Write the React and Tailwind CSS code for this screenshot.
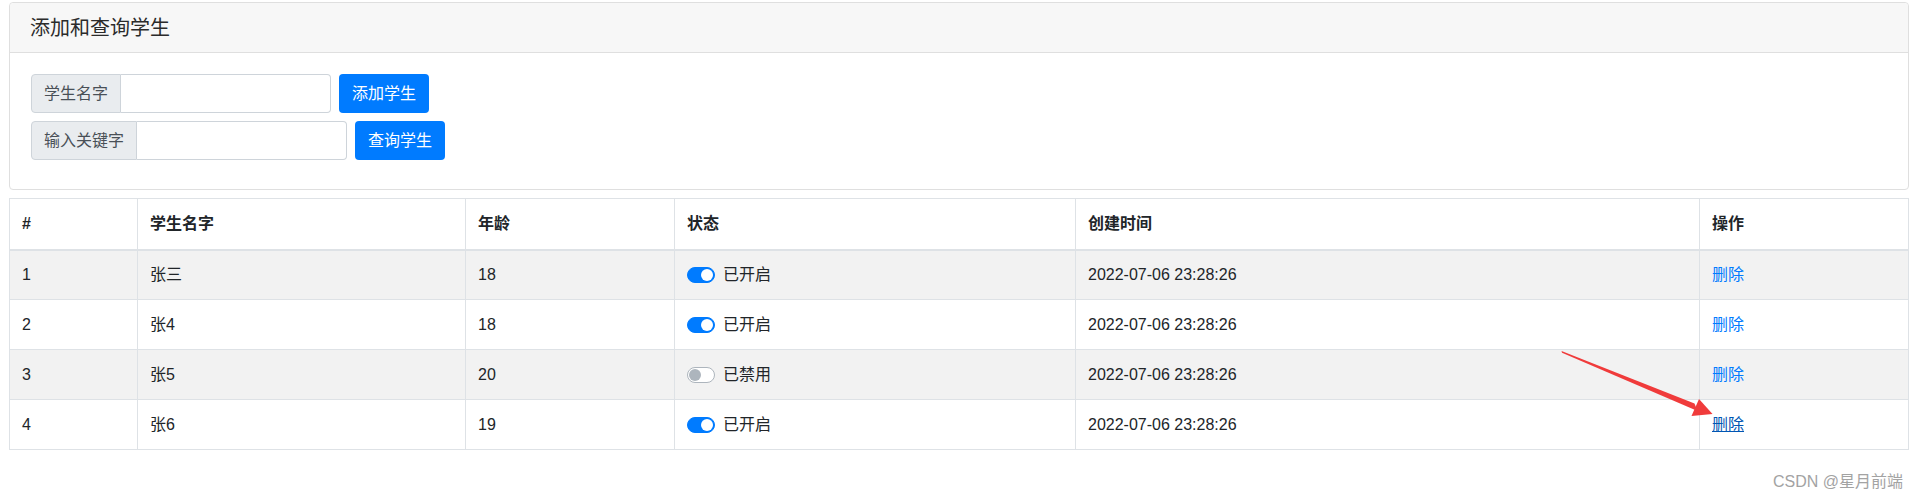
import { useState } from "react";

const students = [
  { id: 1, name: "张三", age: 18, on: true, created: "2022-07-06 23:28:26" },
  { id: 2, name: "张4", age: 18, on: true, created: "2022-07-06 23:28:26" },
  { id: 3, name: "张5", age: 20, on: false, created: "2022-07-06 23:28:26" },
  { id: 4, name: "张6", age: 19, on: true, created: "2022-07-06 23:28:26" },
];

function Switch({ on }) {
  return (
    <span
      className={
        on
          ? "flex items-center justify-end w-[28px] h-[16px] rounded-full border border-[#007bff] bg-[#007bff] px-[1px]"
          : "flex items-center justify-start w-[28px] h-[16px] rounded-full border border-[#adb5bd] bg-white px-[1px]"
      }
    >
      <span
        className={
          on
            ? "block w-[12px] h-[12px] rounded-full bg-white"
            : "block w-[12px] h-[12px] rounded-full bg-[#adb5bd]"
        }
      />
    </span>
  );
}

function InputGroup({ label, button }) {
  const [value, setValue] = useState("");
  return (
    <div className="flex h-[39px]">
      <span className="flex items-center px-3 bg-[#e9ecef] border border-[#ced4da] rounded-l-[4px] text-[#495057] text-base">
        {label}
      </span>
      <input
        value={value}
        onChange={(e) => setValue(e.target.value)}
        className="w-[210px] border border-l-0 border-[#ced4da] rounded-r-[4px] px-3 outline-none"
      />
      <button className="ml-[8px] px-[13px] bg-[#007bff] text-white text-base rounded-[4px]">
        {button}
      </button>
    </div>
  );
}

function App() {
  return (
    <div
      className="relative min-h-[499px] bg-white text-[#212529] text-base"
      style={{ fontFamily: '"Liberation Sans", "Noto Sans CJK SC", sans-serif' }}
    >
      <div className="pt-[2px] pl-[9px] pr-[10px]">
        {/* Card */}
        <div className="border border-[#dfdfdf] rounded-[4px]">
          <div className="h-[50px] flex items-center px-5 bg-[#f7f7f7] border-b border-[#dfdfdf] rounded-t-[4px]">
            <h5 className="text-[20px] leading-6 text-[#2b2b2b]">添加和查询学生</h5>
          </div>
          <div className="px-[21px] pt-[21px] pb-[29px] flex flex-col gap-[8px]">
            <InputGroup label="学生名字" button="添加学生" />
            <InputGroup label="输入关键字" button="查询学生" />
          </div>
        </div>

        {/* Table */}
        <table className="mt-[8px] w-full table-fixed border-collapse">
          <colgroup>
            <col className="w-[128px]" />
            <col className="w-[328px]" />
            <col className="w-[209px]" />
            <col className="w-[401px]" />
            <col className="w-[624px]" />
            <col className="w-[209px]" />
          </colgroup>
          <thead>
            <tr className="h-[51px]">
              {["#", "学生名字", "年龄", "状态", "创建时间", "操作"].map((h) => (
                <th
                  key={h}
                  className="border border-[#dee2e6] border-b-2 px-3 text-left font-bold align-middle"
                >
                  {h}
                </th>
              ))}
            </tr>
          </thead>
          <tbody>
            {students.map((s, i) => (
              <tr key={s.id} className={i % 2 === 0 ? "h-[50px] bg-[#f2f2f2]" : "h-[50px] bg-white"}>
                <td className="border border-[#dee2e6] px-3 align-middle">{s.id}</td>
                <td className="border border-[#dee2e6] px-3 align-middle">{s.name}</td>
                <td className="border border-[#dee2e6] px-3 align-middle">{s.age}</td>
                <td className="border border-[#dee2e6] px-3 align-middle">
                  <div className="flex items-center gap-2">
                    <Switch on={s.on} />
                    <span>{s.on ? "已开启" : "已禁用"}</span>
                  </div>
                </td>
                <td className="border border-[#dee2e6] px-3 align-middle">{s.created}</td>
                <td className="border border-[#dee2e6] px-3 align-middle">
                  <a
                    href="#"
                    className={
                      i === 3
                        ? "text-[#0056b3] underline"
                        : "text-[#007bff] no-underline"
                    }
                  >
                    删除
                  </a>
                </td>
              </tr>
            ))}
          </tbody>
        </table>

        <div className="mt-[22px] flex justify-end pr-[6px] text-[16px] leading-5 text-[#a3a3a3]">
          CSDN @星月前端
        </div>
      </div>

      {/* red annotation arrow */}
      <svg
        className="absolute inset-0 pointer-events-none"
        width="1919"
        height="499"
        viewBox="0 0 1919 499"
      >
        <polygon
          points="1561.5,351 1562,352.8 1697.5,411 1694.5,403.5"
          fill="#f03b3b"
        />
        <polygon points="1712.5,414 1691.5,416 1699,399" fill="#f03b3b" />
      </svg>
    </div>
  );
}

export default App;
